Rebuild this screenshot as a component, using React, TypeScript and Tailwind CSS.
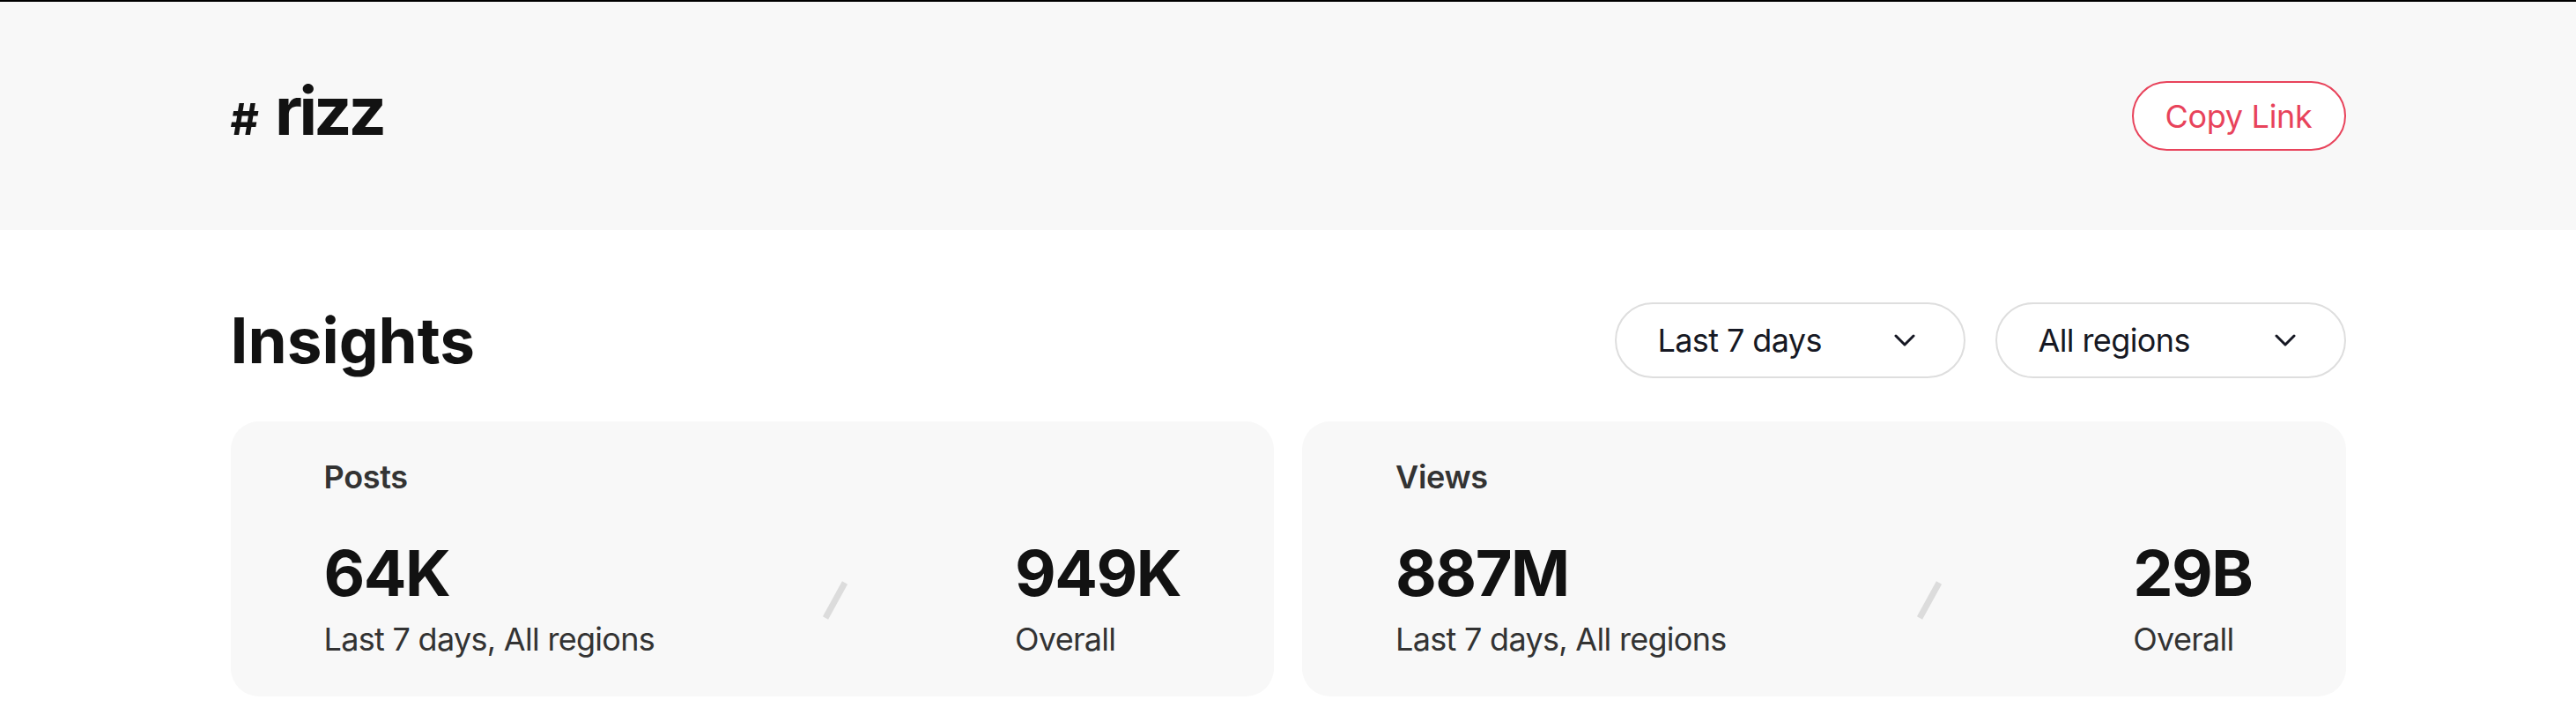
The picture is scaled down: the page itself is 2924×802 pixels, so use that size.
import React from "react";

function Chevron() {
  return (
    <svg width="24" height="14" viewBox="0 0 24 14" fill="none">
      <path d="M2 2 L12 12 L22 2" stroke="#161823" strokeWidth="3" strokeLinecap="round" strokeLinejoin="round" />
    </svg>
  );
}

function Dropdown({ label }: { label: string }) {
  return (
    <button className="flex h-[86px] w-[398px] items-center justify-between rounded-full border-2 border-[#dedede] bg-white pl-[47px] pr-[55px] text-[36px] leading-[44px] tracking-[-0.6px] text-[#161823]">
      <span>{label}</span>
      <Chevron />
    </button>
  );
}

function Slash() {
  return (
    <svg width="30" height="44" viewBox="0 0 30 44" className="shrink-0">
      <line x1="26" y1="2" x2="4" y2="42" stroke="#dcdcdc" strokeWidth="7" />
    </svg>
  );
}

function StatCard({ title, recent, overall }: { title: string; recent: string; overall: string }) {
  return (
    <div className="rounded-[32px] bg-[#f8f8f8] px-[106px] pb-[43px] pt-[41px]">
      <div className="text-[36px] font-semibold leading-[44px] tracking-[-0.3px] text-[#333333]">{title}</div>
      <div className="mt-[51px] flex items-center justify-between">
        <div>
          <div className="text-[72px] font-bold leading-[72px] tracking-[-1.5px] text-[#121212]">{recent}</div>
          <div className="mt-[17px] text-[36px] leading-[44px] tracking-[-0.7px] text-[#333333]">Last 7 days, All regions</div>
        </div>
        <Slash />
        <div>
          <div className="text-[72px] font-bold leading-[72px] tracking-[-1.5px] text-[#121212]">{overall}</div>
          <div className="mt-[17px] text-[36px] leading-[44px] tracking-[-0.7px] text-[#333333]">Overall</div>
        </div>
      </div>
    </div>
  );
}

export default function App() {
  return (
    <div className="min-h-screen border-t-2 border-black bg-white font-['Inter',sans-serif] text-[#121212]">
      <header className="h-[259px] bg-[#f8f8f8]">
        <div className="mx-auto flex h-full max-w-[2401px] items-center justify-between">
          <h1 className="mb-[14px] flex items-baseline font-bold">
            <span className="mr-[18px] text-[50px] leading-none">#</span>
            <span className="text-[76px] leading-none tracking-[-4px]">rizz</span>
          </h1>
          <button className="flex h-[79px] w-[243px] items-center justify-center rounded-full border-2 border-[#e8435b] bg-white text-[36px] leading-none tracking-[-0.3px] text-[#e8435b]">
            Copy Link
          </button>
        </div>
      </header>
      <main className="mx-auto max-w-[2401px]">
        <div className="mt-[82px] flex h-[86px] items-center justify-between">
          <h2 className="text-[71px] font-bold leading-none">Insights</h2>
          <div className="flex gap-[34px]">
            <Dropdown label="Last 7 days" />
            <Dropdown label="All regions" />
          </div>
        </div>
        <div className="mt-[49px] grid grid-cols-2 gap-[32px]">
          <StatCard title="Posts" recent="64K" overall="949K" />
          <StatCard title="Views" recent="887M" overall="29B" />
        </div>
      </main>
    </div>
  );
}
